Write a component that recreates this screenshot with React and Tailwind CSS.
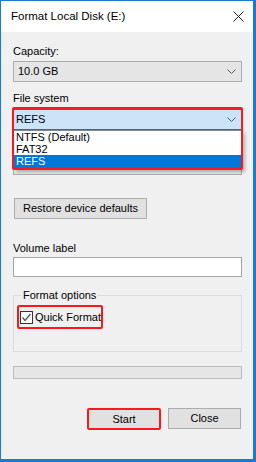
import React from 'react';

const font = { fontFamily: '"Liberation Sans", Arial, sans-serif' };

function Chevron() {
  return (
    <svg width="9" height="5" viewBox="0 0 9 5" className="shrink-0">
      <polyline points="0.5,0.5 4.5,4.5 8.5,0.5" fill="none" stroke="#5a5a5a" strokeWidth="1" />
    </svg>
  );
}

function Combo({ value, active, className = '' }) {
  return (
    <div
      className={`flex h-[21px] w-[229px] items-center justify-between border pr-[5px] ${
        active ? 'border-[#0078d7] bg-[#cce4f7] pl-[2px]' : 'border-[#adadad] bg-[#e5e5e5] pl-[4px]'
      } ${className}`}
    >
      <span>{value}</span>
      <Chevron />
    </div>
  );
}

export default function App() {
  return (
    <div className="h-[462px] w-[256px] bg-[#1a7ad0] pb-[3px] pl-[1px] pr-[3px] pt-[1px] text-[11px] leading-[13px] text-black" style={font}>
      <div className="flex h-full flex-col bg-[#f0f0f0]">
        {/* title bar */}
        <div className="flex h-[31px] shrink-0 items-center justify-between bg-white pl-[10px] pr-[9px]">
          <span className="text-[11.5px]">Format Local Disk (E:)</span>
          <svg width="11" height="11" viewBox="0 0 11 11">
            <path d="M0.5 0.5 L10.5 10.5 M10.5 0.5 L0.5 10.5" stroke="#1a1a1a" strokeWidth="1" />
          </svg>
        </div>

        <div className="flex flex-col px-[12px]">
          <div className="mt-[13px] h-[13px]">Capacity:</div>
          <Combo value="10.0 GB" className="mt-[3px]" />

          <div className="mt-[10px] h-[13px]">File system</div>
          <div className="relative mt-[4px]">
            <Combo value="REFS" active />
            {/* allocation unit size row, hidden under the open list */}
            <div className="mt-[24px]">
              <Combo value="" />
            </div>

            {/* open dropdown list */}
            <div className="absolute left-0 top-[21px] w-[229px] border border-[#828790] bg-white shadow-[3px_3px_3px_rgba(0,0,0,0.25)]">
              <div className="h-[12px] pl-[2px] leading-[12px]">NTFS (Default)</div>
              <div className="h-[12px] pl-[2px] leading-[12px]">FAT32</div>
              <div className="h-[13px] bg-[#0078d7] pl-[2px] leading-[13px] text-white">REFS</div>
            </div>
            {/* red highlight */}
            <div className="absolute left-[-1px] top-[-2px] h-[63px] w-[231px] rounded-[2px] border-2 border-[#f8191c]" />
          </div>

          <button className="ml-[1px] mt-[23px] h-[21px] w-[133px] border border-[#adadad] bg-[#e1e1e1]">
            Restore device defaults
          </button>

          <div className="mt-[23px] h-[13px]">Volume label</div>
          <div className="mt-[2px] h-[20px] w-[229px] border border-[#a5a5a5] bg-white" />

          {/* format options group */}
          <div className="relative mt-[18px] h-[57px] w-[229px] border border-[#dcdcdc] px-[3px] pt-[9px]">
            <span className="absolute left-[7px] top-[-7px] bg-[#f0f0f0] px-[2px]">Format options</span>
            <div className="flex h-[24px] w-[86px] items-center gap-[2px] whitespace-nowrap rounded-[2px] border-2 border-[#f8191c] pl-[1px]">
              <svg width="13" height="13" viewBox="0 0 13 13" className="shrink-0">
                <rect x="0.5" y="0.5" width="12" height="12" fill="white" stroke="#333333" />
                <polyline points="2.5,6.5 5,9.5 10.5,3" fill="none" stroke="#555555" strokeWidth="1.3" />
              </svg>
              <span>Quick Format</span>
            </div>
          </div>

          <div className="mt-[14px] h-[13px] w-[229px] border border-[#bcbcbc] bg-[#e6e6e6]" />

          <div className="mt-[29px] flex w-[229px] justify-end gap-[7px] pr-[1px]">
            <button className="h-[22px] w-[74px] rounded-[2px] border-2 border-[#f8191c] bg-[#e1e1e1]">Start</button>
            <button className="h-[21px] w-[73px] border border-[#adadad] bg-[#e1e1e1]">Close</button>
          </div>
        </div>
      </div>
    </div>
  );
}
